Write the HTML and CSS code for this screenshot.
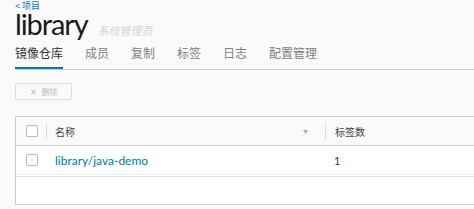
FILE: index.html
```html
<!DOCTYPE html>
<html lang="zh">
<head>
    <meta charset="UTF-8">
    <title>library</title>
    <link rel="stylesheet" href="styles.css">
</head>
<body>
    <div id="page">
        <a class="crumb" href="#">&lt; 项目</a>
        <div class="title-row">
            <h1>library</h1>
            <span class="role">系统管理员</span>
        </div>

        <ul class="tabs">
            <li class="active">镜像仓库</li>
            <li>成员</li>
            <li>复制</li>
            <li>标签</li>
            <li>日志</li>
            <li>配置管理</li>
        </ul>

        <button class="btn-delete"><span class="x">&#x2715;</span> 删除</button>

        <div class="grid">
            <div class="grid-head">
                <div class="cell-check"><span class="box"></span></div>
                <div class="cell-name">名称
                    <svg class="filter" width="5" height="4" viewBox="0 0 5 4"><path d="M0 0h5L2.5 4z" fill="#aaa"/></svg>
                </div>
                <div class="cell-count">标签数</div>
            </div>
            <div class="grid-row">
                <div class="cell-check"><span class="box"></span></div>
                <div class="cell-name"><a href="#">library/java-demo</a></div>
                <div class="cell-count">1</div>
            </div>
            <div class="grid-foot"></div>
        </div>
    </div> <!-- end page -->
</body>
</html>
```

FILE: styles.css
```css
/* General */
html, body {
    margin: 0;
    padding: 0;
    background: #fafafa;
    overflow: hidden;
}

body {
    font-family: "Noto Sans CJK SC", "Noto Sans", sans-serif;
    color: #333;
}

#page {
    padding: 0 0 0 15px;
}

/* Header */
.crumb {
    display: block;
    height: 12px;
    font-size: 9px;
    line-height: 11px;
    color: #0079b8;
    text-decoration: none;
}

.title-row {
    display: flex;
    align-items: baseline;
    height: 32px;
}

h1 {
    margin: 0;
    font-family: Lato, "Liberation Sans", sans-serif;
    font-weight: 400;
    font-size: 29px;
    line-height: 24px;
    letter-spacing: -1.1px;
    color: #1a1a1a;
}

.role {
    margin-left: 10px;
    font-size: 11px;
    font-style: italic;
    color: #d4d4d4;
}

/* Tabs */
.tabs {
    list-style: none;
    margin: 0;
    padding: 0;
    display: flex;
    border-bottom: 1px solid #ccc;
    height: 25px;
}

.tabs li {
    margin-right: 22px;
    padding: 1px 0 6px;
    font-size: 12px;
    line-height: 16px;
    color: #808080;
}

.tabs li.active {
    color: #333;
    border-bottom: 2px solid #0079b8;
}

/* Delete button */
.btn-delete {
    display: block;
    margin-top: 13px;
    width: 57px;
    height: 17px;
    padding: 0;
    border: 1px solid #ddd;
    border-radius: 2px;
    background: #fafafa;
    font-family: "Noto Sans CJK SC", sans-serif;
    font-size: 8px;
    color: #bbb;
}

.btn-delete .x {
    margin-right: 3px;
}

/* Datagrid */
.grid {
    margin-top: 16px;
    width: 520px;
    border: 1px solid #ccc;
    border-right: none;
    background: #fff;
}

.grid-head, .grid-row {
    display: flex;
    align-items: center;
}

.grid-head {
    height: 28px;
    background: #fafafa;
    border-bottom: 1px solid #ccc;
    font-size: 10px;
    color: #444;
}

.grid-row {
    height: 28px;
    border-bottom: 1px solid #eee;
    font-size: 11px;
}

.cell-check {
    width: 31px;
    height: 100%;
    display: flex;
    align-items: center;
    justify-content: center;
}

.grid-head .cell-check {
    position: relative;
}

.grid-head .cell-check::after {
    content: "";
    position: absolute;
    right: 0;
    top: 6px;
    height: 16px;
    border-right: 1px solid #ddd;
}

.box {
    width: 10px;
    height: 10px;
    border: 1px solid #bbb;
    border-radius: 2px;
    background: #fff;
}

.cell-name {
    width: 270px;
    padding-left: 8px;
    display: flex;
    align-items: center;
    height: 100%;
    position: relative;
}

.grid-head .cell-name {
    border-right: 1px solid #ddd;
    height: 18px;
}

.filter {
    position: absolute;
    right: 17px;
    top: 8px;
}

.cell-name a {
    color: #0079b8;
    text-decoration: none;
    font-family: Lato, "Liberation Sans", sans-serif;
    font-size: 12px;
}

.cell-count {
    padding-left: 9px;
    font-family: Lato, "Noto Sans CJK SC", sans-serif;
}

.grid-foot {
    height: 27px;
    border-top: 1px solid #ddd;
    margin-top: 1px;
}
```
